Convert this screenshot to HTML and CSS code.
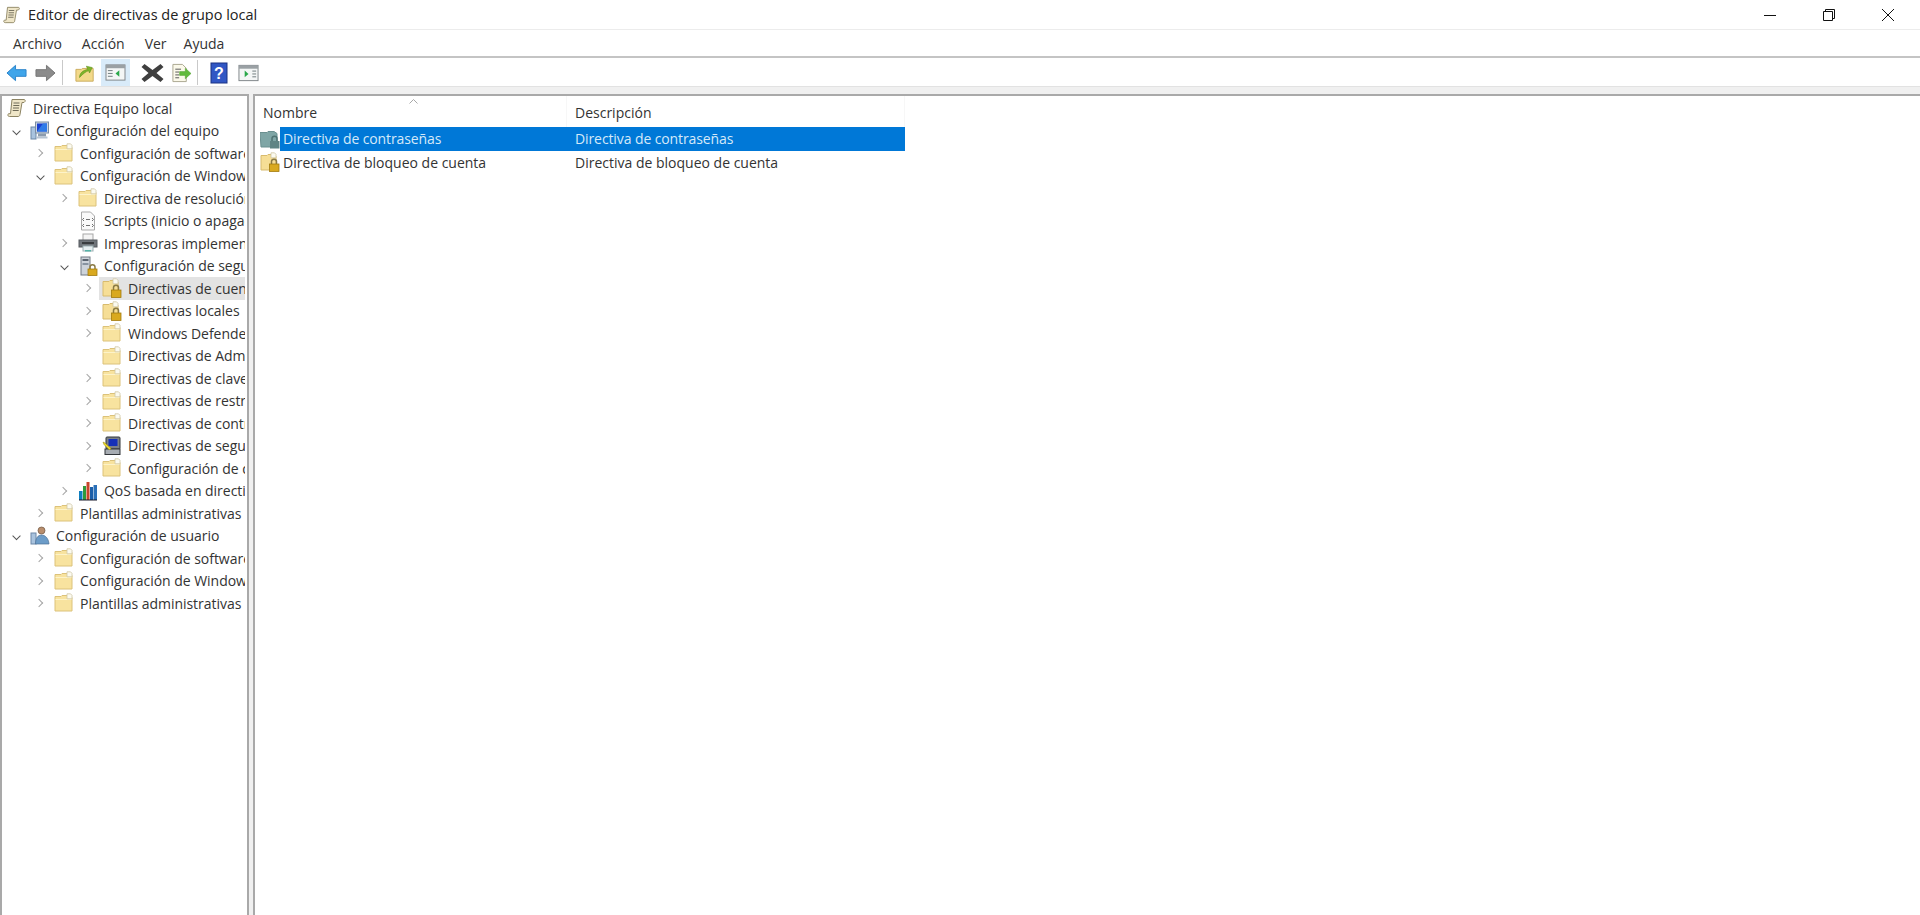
FILE: index.html
```html
<!DOCTYPE html>
<html lang="es">
<head>
<meta charset="utf-8">
<title>Editor de directivas de grupo local</title>
<link rel="stylesheet" href="styles.css">
</head>
<body>
<svg class="defs" width="0" height="0" aria-hidden="true">
  <defs>
    <symbol id="i-scroll" viewBox="0 0 20 20">
      <path d="M5 1.500h12c1 0 1.500 1 1 2l-1 1h-2l-2 12c-.2 1.500-1 2-2 2H2.500c-1.200 0-2-1-1.500-2l.5-.8h2z" fill="#efe6c8" stroke="#8d8463"/>
      <path d="M6.500 5h6M6.300 7.500h6M6 10h6M5.700 12.500h6" stroke="#6e6a58" fill="none"/>
    </symbol>
    <symbol id="i-pc" viewBox="0 0 20 20">
      <rect x="1" y="6" width="5" height="12" fill="#a9c3de" stroke="#6d88a8"/>
      <rect x="5.500" y="1" width="13" height="11" fill="#c8d4e2" stroke="#7d8ea3"/>
      <rect x="7" y="2.500" width="10" height="8" fill="#1a3fd0"/>
      <path d="M7 10.500l6-8h4v8z" fill="#2f7be8"/>
      <rect x="8" y="12.500" width="8" height="3" fill="#8c9bad"/>
      <rect x="6.500" y="15.500" width="11" height="2" fill="#b7c4d2"/>
    </symbol>
    <symbol id="i-folder" viewBox="0 0 20 20">
      <path d="M1 3.500h6l1-1h7.500l2.500 2v13.500h-17z" fill="#f8e39f" stroke="#dcc27a"/>
      <path d="M1.500 6.500h16" stroke="#fdf3c9" fill="none"/>
      <path d="M13 .8h3.500l1.500 1.500v3.500h-5z" fill="#fbfaf0" stroke="#cfc7a6" stroke-width=".8"/>
    </symbol>
    <symbol id="i-lock" viewBox="0 0 20 20">
      <path d="M1 3.500h6l1-1h6l2 2v13.500h-15z" fill="#f6de96" stroke="#d8bb6e"/>
      <path d="M11 .8h3.500l1.500 1.500v3.500h-5z" fill="#fbfaf0" stroke="#cfc7a6" stroke-width=".8"/>
      <path d="M11.500 12V9.500c0-3 5-3 5 0V12" fill="none" stroke="#8a7a45" stroke-width="1.500"/>
      <rect x="9.500" y="12" width="9.500" height="7.500" fill="#d9a91f" stroke="#a27c10" stroke-width=".8"/>
    </symbol>
    <symbol id="i-lock-sel" viewBox="0 0 20 20">
      <path d="M0 3.500h7l1-1h6l3 2v13.500h-16z" fill="#7fa6a6" stroke="#6b9090"/>
      <path d="M12 12V9.500c0-3 5-3 5 0V12" fill="none" stroke="#4f7373" stroke-width="1.500"/>
      <rect x="10" y="12" width="9.500" height="7.500" fill="#5f8484"/>
    </symbol>
    <symbol id="i-script" viewBox="0 0 20 20">
      <path d="M3.500 1h9l4 4v14h-13z" fill="#fafafa" stroke="#a9a9a9"/>
      <path d="M6 7l-1.500 1.500L6 10M14 7l1.500 1.500L14 10M8 8.500h4M6 13l-1.500 1.500L6 16M14 13l1.500 1.500L14 16M8 14.500h4" fill="none" stroke="#707070"/>
    </symbol>
    <symbol id="i-printer" viewBox="0 0 20 20">
      <rect x="5" y="1" width="10" height="7" fill="#f4f4f4" stroke="#a7a7a7"/>
      <rect x="1" y="7" width="18" height="7" fill="#6f7479" stroke="#575b60"/>
      <rect x="4" y="9" width="12" height="2" fill="#3a3d40"/>
      <rect x="5" y="13" width="10" height="5" fill="#e6eef0" stroke="#9db0b3"/>
      <rect x="7" y="17" width="6" height="1.500" fill="#55b3a8"/>
    </symbol>
    <symbol id="i-server" viewBox="0 0 20 20">
      <rect x="3" y="1" width="9" height="18" fill="#cdd3da" stroke="#727a84"/>
      <rect x="4.500" y="3" width="6" height="2" fill="#5a6470"/>
      <rect x="4.500" y="7" width="6" height="2" fill="#8793a0"/>
      <path d="M12 13v-2c0-3 5-3 5 0v2" fill="none" stroke="#8a7a45" stroke-width="1.500"/>
      <rect x="10" y="13" width="9" height="6.500" fill="#d9a91f" stroke="#a27c10" stroke-width=".8"/>
    </symbol>
    <symbol id="i-key" viewBox="0 0 20 20">
      <rect x="4" y="1" width="14" height="12" rx="1" fill="#7b8087" stroke="#33363a"/>
      <rect x="6.500" y="3" width="9" height="7" fill="#1530b8"/>
      <rect x="3" y="13" width="15" height="5.500" fill="#a7acb2" stroke="#33363a"/>
      <path d="M1 6l2 1 6 5.500-1.500 1.500L2 8.500z" fill="#f1de2d" stroke="#9f8f10" stroke-width=".6"/>
    </symbol>
    <symbol id="i-qos" viewBox="0 0 20 20">
      <rect x="1" y="10" width="3.500" height="9" fill="#0f7fc0"/>
      <rect x="5" y="5" width="3" height="14" fill="#2f9a3c"/>
      <rect x="8.500" y="1" width="3" height="18" fill="#c9452c"/>
      <rect x="12" y="6" width="3" height="13" fill="#1d5fa8"/>
      <rect x="15.500" y="4" width="3.500" height="15" fill="#2b70b8"/>
      <path d="M1 19h18" stroke="#1a1a2a"/>
    </symbol>
    <symbol id="i-user" viewBox="0 0 20 20">
      <rect x="1" y="7" width="5" height="11" fill="#a9c3de" stroke="#6d88a8"/>
      <circle cx="11.500" cy="4.500" r="3.500" fill="#b98e6d" stroke="#6f5440" stroke-width=".7"/>
      <path d="M5.500 18c0-6 2.500-9 6-9s7 3 7.500 9z" fill="#6c9cc8" stroke="#4a7097" stroke-width=".7"/>
    </symbol>
  </defs>
</svg>

<header class="titlebar">
  <svg class="title-icon"><use href="#i-scroll"/></svg>
  <span class="title-text">Editor de directivas de grupo local</span>
  <div class="winbtns">
    <svg class="winbtn" viewBox="0 0 14 14"><path d="M1 7.500h12" stroke="#111" fill="none"/></svg>
    <svg class="winbtn" viewBox="0 0 14 14"><path d="M1.500 3.500h9v9h-9zM3.500 3.500v-2h9v9h-2" stroke="#111" fill="none"/></svg>
    <svg class="winbtn" viewBox="0 0 14 14"><path d="M1 1l12 12M13 1L1 13" stroke="#111" fill="none"/></svg>
  </div>
</header>

<nav class="menubar">
  <span class="menu-item">Archivo</span>
  <span class="menu-item">Acción</span>
  <span class="menu-item">Ver</span>
  <span class="menu-item menu-last">Ayuda</span>
</nav>

<div class="toolbar">
  <button class="tool"><svg viewBox="0 0 22 20"><path d="M1 10l9-8v4.500h11v7H10V18z" fill="#3fa5ea" stroke="#2b83c9"/></svg></button>
  <button class="tool"><svg viewBox="0 0 22 20"><path d="M21 10l-9-8v4.500H1v7h11V18z" fill="#8b8b8b" stroke="#767676"/></svg></button>
  <span class="tool-sep"></span>
  <button class="tool tool-folder"><svg viewBox="0 0 22 20"><path d="M1 6h6l1-1h12v14H1z" fill="#f3d98a" stroke="#c9a95a"/><path d="M5 15c0-5 4-8 9-9l-1.500-3.500L19 4l-3 6-1-2.500c-3 1-6 3-10 7.500z" fill="#7fb52a" stroke="#5d8f19" stroke-width=".6"/></svg></button>
  <button class="tool tool-active"><svg viewBox="0 0 22 20"><rect x="1" y="2" width="20" height="16" fill="#f4f6f6" stroke="#7e8488"/><rect x="1" y="2" width="20" height="3.500" fill="#9aa0a4"/><path d="M3 8h5M3 11h5M3 14h5" stroke="#6d7a7c" fill="none"/><path d="M15 7.500v7l-4-3.500z" fill="#2aa84a"/></svg></button>
  <button class="tool tool-x"><svg viewBox="0 0 22 20"><path d="M3 1l8 6 8-6 3 3-7 6 7 6-3 3-8-6-8 6-3-3 7-6-7-6z" fill="#3f3f3f"/></svg></button>
  <button class="tool tool-export"><svg viewBox="0 0 22 20"><path d="M2 1h10l4 4v14H2z" fill="#fbf9ea" stroke="#a9a68f"/><path d="M4.500 6h6M4.500 9h4M4.500 12h4M4.500 15h4" stroke="#555" fill="none"/><path d="M9 8.500h6V5l6 5.500-6 5.500v-3.500H9z" fill="#62bb3c" stroke="#4c9b2a" stroke-width=".5"/></svg></button>
  <span class="tool-sep tool-sep-b"></span>
  <button class="tool tool-help"><svg viewBox="0 0 18 22"><rect x="1" y="1" width="16" height="20" fill="#3157c4" stroke="#1a3284"/><text x="9" y="17" class="help-q">?</text></svg></button>
  <button class="tool tool-panel"><svg viewBox="0 0 22 20"><rect x="1" y="2" width="20" height="16" fill="#f4f6f6" stroke="#7e8488"/><rect x="1" y="2" width="20" height="3.500" fill="#9aa0a4"/><path d="M15 8h4M15 11h4M15 14h4" stroke="#6d7a7c" fill="none"/><path d="M7 7.500v7l4-3.500z" fill="#2aa84a"/></svg></button>
</div>

<main class="panes">
  <section class="tree">
    <div class="row"><span class="chev"></span><svg class="icon"><use href="#i-scroll"/></svg><span class="label">Directiva Equipo local</span></div>
    <div class="row l1"><span class="chev open"></span><svg class="icon"><use href="#i-pc"/></svg><span class="label">Configuración del equipo</span></div>
    <div class="row l2"><span class="chev"></span><svg class="icon"><use href="#i-folder"/></svg><span class="label">Configuración de software</span></div>
    <div class="row l2"><span class="chev open"></span><svg class="icon"><use href="#i-folder"/></svg><span class="label">Configuración de Windows</span></div>
    <div class="row l3"><span class="chev"></span><svg class="icon"><use href="#i-folder"/></svg><span class="label">Directiva de resolución de nombres</span></div>
    <div class="row l3"><span class="chev none"></span><svg class="icon"><use href="#i-script"/></svg><span class="label">Scripts (inicio o apagado)</span></div>
    <div class="row l3"><span class="chev"></span><svg class="icon"><use href="#i-printer"/></svg><span class="label">Impresoras implementadas</span></div>
    <div class="row l3"><span class="chev open"></span><svg class="icon"><use href="#i-server"/></svg><span class="label">Configuración de seguridad</span></div>
    <div class="row l4 selected"><span class="chev"></span><svg class="icon"><use href="#i-lock"/></svg><span class="label">Directivas de cuenta</span></div>
    <div class="row l4"><span class="chev"></span><svg class="icon"><use href="#i-lock"/></svg><span class="label">Directivas locales</span></div>
    <div class="row l4"><span class="chev"></span><svg class="icon"><use href="#i-folder"/></svg><span class="label">Windows Defender Firewall</span></div>
    <div class="row l4"><span class="chev none"></span><svg class="icon"><use href="#i-folder"/></svg><span class="label">Directivas de Administrador</span></div>
    <div class="row l4"><span class="chev"></span><svg class="icon"><use href="#i-folder"/></svg><span class="label">Directivas de clave pública</span></div>
    <div class="row l4"><span class="chev"></span><svg class="icon"><use href="#i-folder"/></svg><span class="label">Directivas de restricción</span></div>
    <div class="row l4"><span class="chev"></span><svg class="icon"><use href="#i-folder"/></svg><span class="label">Directivas de control</span></div>
    <div class="row l4"><span class="chev"></span><svg class="icon"><use href="#i-key"/></svg><span class="label">Directivas de seguridad IP</span></div>
    <div class="row l4"><span class="chev"></span><svg class="icon"><use href="#i-folder"/></svg><span class="label">Configuración de directiva</span></div>
    <div class="row l3"><span class="chev"></span><svg class="icon"><use href="#i-qos"/></svg><span class="label">QoS basada en directiva</span></div>
    <div class="row l2"><span class="chev"></span><svg class="icon"><use href="#i-folder"/></svg><span class="label">Plantillas administrativas</span></div>
    <div class="row l1"><span class="chev open"></span><svg class="icon"><use href="#i-user"/></svg><span class="label">Configuración de usuario</span></div>
    <div class="row l2"><span class="chev"></span><svg class="icon"><use href="#i-folder"/></svg><span class="label">Configuración de software</span></div>
    <div class="row l2"><span class="chev"></span><svg class="icon"><use href="#i-folder"/></svg><span class="label">Configuración de Windows</span></div>
    <div class="row l2"><span class="chev"></span><svg class="icon"><use href="#i-folder"/></svg><span class="label">Plantillas administrativas</span></div>
  </section>

  <section class="list">
    <div class="list-head">
      <div class="col-name">Nombre<svg class="sort" viewBox="0 0 9 5"><path d="M.5 4.500l4-4 4 4" fill="none" stroke="#a8a8a8"/></svg></div>
      <div class="col-desc">Descripción</div>
    </div>
    <div class="list-row">
      <svg class="list-icon"><use href="#i-lock-sel"/></svg>
      <div class="list-cells sel"><span class="cell-name">Directiva de contraseñas</span><span class="cell-desc">Directiva de contraseñas</span></div>
    </div>
    <div class="list-row">
      <svg class="list-icon"><use href="#i-lock"/></svg>
      <div class="list-cells"><span class="cell-name">Directiva de bloqueo de cuenta</span><span class="cell-desc">Directiva de bloqueo de cuenta</span></div>
    </div>
  </section>
</main>
</body>
</html>
```
FILE: styles.css
```css
* { box-sizing: border-box; }
html, body { margin: 0; height: 915px; overflow: hidden; }
body {
  display: flex;
  flex-direction: column;
  background: #fff;
  color: #222;
  font-family: "Open Sans", "Noto Sans", "Liberation Sans", sans-serif;
  font-size: 14px;
}
.defs { position: absolute; }

.titlebar {
  height: 30px;
  flex: none;
  display: flex;
  align-items: center;
  padding-left: 3px;
  border-bottom: 1px solid #ececec;
}
.title-icon { width: 18px; height: 18px; margin-right: 7px; }
.title-text { font-size: 14.5px; color: #222; }
.winbtns { margin-left: auto; display: flex; gap: 45px; padding-right: 25px; }
.winbtn { width: 14px; height: 14px; display: block; }

.menubar {
  height: 28px;
  flex: none;
  display: flex;
  align-items: center;
  padding-left: 13px;
  gap: 20px;
  border-bottom: 2px solid #c4c4c4;
  font-size: 14px;
  color: #333;
}
.menu-last { margin-left: -3px; }

.toolbar {
  height: 29px;
  flex: none;
  display: flex;
  align-items: center;
  padding: 1px 0 0 6px;
  border-bottom: 1px solid #e2e2e2;
}
.tool {
  width: 21px;
  height: 20px;
  padding: 0;
  border: 0;
  background: none;
  margin-right: 8px;
  display: block;
}
.tool svg { width: 100%; height: 100%; display: block; }
.tool-sep { width: 1px; height: 25px; background: #c9c9c9; margin: 0 12px 0 -2px; }
.tool-sep-b { margin: 0 12px 0 -1px; }
.tool-folder { width: 20px; margin-right: 6px; }
.tool-active {
  width: 29px;
  height: 27px;
  padding: 4px;
  background: #d9ebf9;
  margin-right: 11px;
}
.tool-x { width: 23px; margin-right: 7px; }
.tool-export { margin-right: 6px; }
.tool-help { width: 18px; height: 22px; margin-right: 10px; }
.help-q { font: bold 16px "Liberation Sans", sans-serif; fill: #fff; text-anchor: middle; }

.panes {
  flex: 1;
  min-height: 0;
  display: flex;
  gap: 4px;
  background: #f0f0f0;
  padding-top: 7px;
}
.tree {
  width: 249px;
  flex: none;
  background: #fff;
  border: 2px solid #a9a9a9;
  border-bottom: 0;
  padding: 1px 2px 0 0;
  overflow: hidden;
}
.row {
  height: 22.5px;
  display: flex;
  align-items: center;
  white-space: nowrap;
  overflow: hidden;
  padding-left: 5px;
  font-size: 14px;
  letter-spacing: -0.03px;
  color: #333;
}
.row .chev { display: none; }
.l1 .chev, .l2 .chev, .l3 .chev, .l4 .chev {
  display: block;
  flex: none;
  width: 6px;
  height: 6px;
  margin-right: 12.5px;
  border-right: 1px solid #a6a6a6;
  border-bottom: 1px solid #a6a6a6;
  transform: rotate(-45deg);
}
.row.l1 { padding-left: 9.5px; }
.row.l2 { padding-left: 33.5px; }
.row.l3 { padding-left: 57.5px; }
.row.l4 { padding-left: 81.5px; }
.row .chev.open { transform: translateX(1.5px) rotate(45deg); border-color: #555; }
.row .chev.none { visibility: hidden; }
.icon { width: 20px; height: 20px; flex: none; margin-right: 6px; }
.selected { position: relative; }
.selected::before {
  content: "";
  position: absolute;
  left: 97px;
  right: 0;
  top: 0;
  bottom: 0;
  background: #e3e3e3;
}
.selected > * { position: relative; }

.list {
  flex: 1;
  min-width: 0;
  background: #fff;
  border: 2px solid #a9a9a9;
  border-right: 0;
  border-bottom: 0;
}
.list-head { display: flex; width: 650px; height: 31px; font-size: 14px; color: #333; }
.col-name { width: 312px; padding: 0 0 5px 8px; position: relative; display: flex; align-items: flex-end; border-right: 1px solid #f7f7f7; }
.col-desc { width: 338px; padding: 0 0 5px 8px; display: flex; align-items: flex-end; border-right: 1px solid #f7f7f7; }
.sort { position: absolute; left: 154px; top: 3px; width: 9px; height: 5px; }
.list-row { display: flex; height: 23.5px; align-items: center; width: 650px; font-size: 14px; color: #333; }
.list-icon { width: 20px; height: 20px; flex: none; margin-left: 5px; }
.list-cells { flex: 1; display: flex; height: 100%; align-items: center; white-space: nowrap; }
.list-cells.sel { background: #0078d7; color: #d5e9f9; letter-spacing: -0.1px; }
.cell-name { width: 295px; padding-left: 3px; }
.cell-desc { padding-left: 0; }
```
